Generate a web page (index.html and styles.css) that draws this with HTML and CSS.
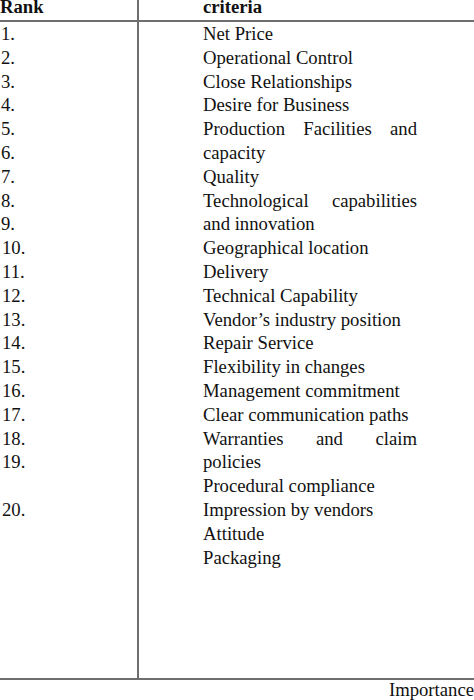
FILE: index.html
```html
<!DOCTYPE html>
<html>
<head>
<meta charset="utf-8">
<link rel="stylesheet" href="styles.css">
</head>
<body>
<div class="table">
  <div class="head rank-head">Rank</div>
  <div class="head crit-head">criteria</div>
  <div class="rank-col">
    <div class="line">1.</div>
    <div class="line">2.</div>
    <div class="line">3.</div>
    <div class="line">4.</div>
    <div class="line">5.</div>
    <div class="line">6.</div>
    <div class="line">7.</div>
    <div class="line">8.</div>
    <div class="line">9.</div>
    <div class="line two">10.</div>
    <div class="line two">11.</div>
    <div class="line two">12.</div>
    <div class="line two">13.</div>
    <div class="line two">14.</div>
    <div class="line two">15.</div>
    <div class="line two">16.</div>
    <div class="line two">17.</div>
    <div class="line two">18.</div>
    <div class="line two">19.</div>
    <div class="line">&nbsp;</div>
    <div class="line two">20.</div>
  </div>
  <div class="crit-col">
    <p>Net Price</p>
    <p>Operational Control</p>
    <p>Close Relationships</p>
    <p>Desire for Business</p>
    <p>Production Facilities and capacity</p>
    <p>Quality</p>
    <p>Technological capabilities and innovation</p>
    <p>Geographical location</p>
    <p>Delivery</p>
    <p>Technical Capability</p>
    <p>Vendor’s industry position</p>
    <p>Repair Service</p>
    <p>Flexibility in changes</p>
    <p>Management commitment</p>
    <p>Clear communication paths</p>
    <p>Warranties and claim policies</p>
    <p>Procedural compliance</p>
    <p>Impression by vendors</p>
    <p>Attitude</p>
    <p>Packaging</p>
  </div>
</div>
<div class="caption">Importance</div>
</body>
</html>
```

FILE: styles.css
```css
html, body {
  margin: 0;
  padding: 0;
  background: #ffffff;
}

body {
  width: 474px;
  height: 700px;
  overflow: hidden;
  font-family: "Liberation Serif", "Times New Roman", serif;
  font-size: 18.7px;
  line-height: 23.8px;
  color: #111111;
}

.table {
  display: grid;
  grid-template-columns: 139px 1fr;
  grid-template-rows: 22px 656px;
  border-bottom: 2px solid #6e6e6e;
}

.head {
  font-weight: bold;
  line-height: 13px;
  height: 20px;
  border-bottom: 2px solid #6e6e6e;
}

.rank-head {
  border-right: 2px solid #6e6e6e;
  padding-left: 0;
}

.crit-head {
  padding-left: 64px;
}

.rank-col {
  border-right: 2px solid #6e6e6e;
  padding-left: 1px;
}

.line {
  height: 23.8px;
}

.line.two {
  padding-left: 1px;
}

.crit-col {
  padding-left: 64px;
  width: 214px;
}

.crit-col p {
  margin: 0;
  text-align: justify;
}

.caption {
  text-align: right;
  line-height: 20px;
}
```
